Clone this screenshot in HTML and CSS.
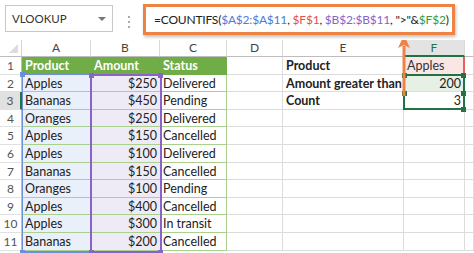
FILE: index.html
```html
<!DOCTYPE html>
<html lang="en">
<head>
    <meta charset="UTF-8">
    <title>COUNTIFS example</title>
    <link rel="stylesheet" href="styles.css">
</head>
<body>
    <div class="toolbar">
        <div class="name-box">VLOOKUP<span class="caret"></span></div>
        <div class="dots"><i></i><i></i><i></i></div>
        <div class="formula">=COUNTIFS(<span class="ref-a">$A$2:$A$11</span>, <span class="ref-f1">$F$1</span>, <span class="ref-b">$B$2:$B$11</span>, "&gt;"&amp;<span class="ref-f2">$F$2</span>)</div>
    </div>

    <div class="sheet">
        <div class="grid">
            <div class="corner"><span></span></div>
            <div class="col-head">A</div>
            <div class="col-head">B</div>
            <div class="col-head">C</div>
            <div class="col-head">D</div>
            <div class="col-head">E</div>
            <div class="col-head active">F</div>
            <div class="col-head"></div>

            <div class="row-head">1</div>
            <div class="cell th">Product</div>
            <div class="cell th">Amount</div>
            <div class="cell th">Status</div>
            <div class="cell"></div>
            <div class="cell label">Product</div>
            <div class="cell crit-f1">Apples</div>
            <div class="cell"></div>

            <div class="row-head">2</div>
            <div class="cell ca">Apples</div>
            <div class="cell cb">$250</div>
            <div class="cell cc">Delivered</div>
            <div class="cell"></div>
            <div class="cell label">Amount greater than</div>
            <div class="cell num crit-f2">200</div>
            <div class="cell"></div>

            <div class="row-head active">3</div>
            <div class="cell ca">Bananas</div>
            <div class="cell cb">$450</div>
            <div class="cell cc">Pending</div>
            <div class="cell"></div>
            <div class="cell label">Count</div>
            <div class="cell num">3</div>
            <div class="cell"></div>

            <div class="row-head">4</div>
            <div class="cell ca">Oranges</div>
            <div class="cell cb">$250</div>
            <div class="cell cc">Delivered</div>
            <div class="cell"></div><div class="cell"></div><div class="cell"></div><div class="cell"></div>

            <div class="row-head">5</div>
            <div class="cell ca">Apples</div>
            <div class="cell cb">$150</div>
            <div class="cell cc">Cancelled</div>
            <div class="cell"></div><div class="cell"></div><div class="cell"></div><div class="cell"></div>

            <div class="row-head">6</div>
            <div class="cell ca">Apples</div>
            <div class="cell cb">$100</div>
            <div class="cell cc">Delivered</div>
            <div class="cell"></div><div class="cell"></div><div class="cell"></div><div class="cell"></div>

            <div class="row-head">7</div>
            <div class="cell ca">Bananas</div>
            <div class="cell cb">$150</div>
            <div class="cell cc">Cancelled</div>
            <div class="cell"></div><div class="cell"></div><div class="cell"></div><div class="cell"></div>

            <div class="row-head">8</div>
            <div class="cell ca">Oranges</div>
            <div class="cell cb">$100</div>
            <div class="cell cc">Pending</div>
            <div class="cell"></div><div class="cell"></div><div class="cell"></div><div class="cell"></div>

            <div class="row-head">9</div>
            <div class="cell ca">Apples</div>
            <div class="cell cb">$400</div>
            <div class="cell cc">Cancelled</div>
            <div class="cell"></div><div class="cell"></div><div class="cell"></div><div class="cell"></div>

            <div class="row-head">10</div>
            <div class="cell ca">Apples</div>
            <div class="cell cb">$300</div>
            <div class="cell cc">In transit</div>
            <div class="cell"></div><div class="cell"></div><div class="cell"></div><div class="cell"></div>

            <div class="row-head">11</div>
            <div class="cell ca">Bananas</div>
            <div class="cell cb">$200</div>
            <div class="cell cc">Cancelled</div>
            <div class="cell"></div><div class="cell"></div><div class="cell"></div><div class="cell"></div>
        </div>

        <!-- reference highlight boxes drawn over the grid -->
        <div class="range range-a"><b class="h tl"></b><b class="h bl"></b></div>
        <div class="range range-b"><b class="h tl"></b><b class="h tr"></b><b class="h bl"></b><b class="h br"></b></div>
        <div class="range range-f1"></div>
        <div class="range range-f2"><b class="h tl"></b><b class="h tr"></b><b class="h ml"></b><b class="h mr"></b><b class="h br"></b></div>

        <svg class="arrow" width="16" height="62" viewBox="0 0 16 62">
            <path d="M8 12 V62" stroke="#ee8444" stroke-width="3" fill="none"/>
            <path d="M8 1 L14 14 L8 11 L2 14 Z" fill="#ee8444"/>
        </svg>
    </div>
</body>
</html>
```

FILE: styles.css
```css
body {
    margin: 0;
    background: #ffffff;
    font-family: Lato, "Liberation Sans", sans-serif;
    color: #222;
    width: 474px;
    height: 253px;
    overflow: hidden;
}
.toolbar {
    height: 40px;
    display: flex;
    align-items: flex-start;
    padding: 4px 0 0 5px;
    box-sizing: border-box;
}
.name-box {
    width: 108px;
    height: 27px;
    box-sizing: border-box;
    border: 1px solid #c8c8c8;
    display: flex;
    align-items: center;
    padding-left: 6px;
    font-size: 11.5px;
    color: #333;
    position: relative;
    margin-top: 1px;
}
.caret {
    position: absolute;
    right: 6px;
    top: 11px;
    border-left: 4px solid transparent;
    border-right: 4px solid transparent;
    border-top: 4px solid #777;
}
.dots {
    width: 32px;
    display: flex;
    flex-direction: column;
    align-items: center;
    gap: 3px;
    padding-top: 12px;
}
.dots i {
    width: 2px;
    height: 2px;
    background: #aaa;
}
.formula {
    width: 312px;
    height: 31px;
    box-sizing: border-box;
    border: 3px solid #ee8444;
    box-shadow: 1px 2px 3px rgba(0, 0, 0, 0.25);
    margin-left: -2px;
    padding-left: 8px;
    display: flex;
    align-items: center;
    font-size: 12px;
    letter-spacing: -0.2px;
    white-space: pre;
    overflow: hidden;
    color: #222;
}
.ref-a { color: #4d7bd6; }
.ref-f1 { color: #e2504c; }
.ref-b { color: #8a63c8; }
.ref-f2 { color: #3b9a3b; }

.sheet {
    position: relative;
    height: 213px;
    overflow: hidden;
}
.grid {
    display: grid;
    grid-template-columns: 22px 69px 69px 67px 56px 121px 61px 9px;
    grid-template-rows: 17px repeat(11, 17.6px);
}
.corner {
    border-right: 1px solid #d4d4d4;
    border-bottom: 1px solid #bdbdbd;
    position: relative;
}
.corner span {
    position: absolute;
    right: 3px;
    bottom: 3px;
    border-left: 9px solid transparent;
    border-bottom: 9px solid #dcdcdc;
}
.col-head {
    border-right: 1px solid #d9d9d9;
    border-bottom: 1px solid #bdbdbd;
    font-size: 12px;
    color: #444;
    text-align: center;
    line-height: 16px;
}
.col-head.active {
    background: #e3e3e3;
    color: #217346;
    border-bottom: 2px solid #217346;
}
.row-head {
    border-right: 1px solid #bdbdbd;
    border-bottom: 1px solid #e1e1e1;
    font-size: 12px;
    color: #555;
    text-align: center;
    line-height: 17px;
}
.row-head.active {
    background: #e1e1e1;
    border-right: 2px solid #217346;
}
.cell {
    border-right: 1px solid #dcdcdc;
    border-bottom: 1px solid #dcdcdc;
    font-size: 12.5px;
    line-height: 17px;
    padding: 0 3px;
    white-space: nowrap;
    overflow: hidden;
}
.th {
    background: #70ad47;
    color: #fff;
    font-weight: bold;
    border-right: none;
    border-bottom: 1px solid #70ad47;
}
.ca {
    background: #eaf0fa;
    border-right: none;
    border-bottom: 1px solid #a9d08e;
}
.cb {
    background: #efebf6;
    text-align: right;
    border-right: none;
    border-bottom: 1px solid #a9d08e;
}
.cc {
    border-right: 1px solid #a9d08e;
    border-bottom: 1px solid #a9d08e;
}
.label {
    font-weight: bold;
}
.num {
    text-align: right;
}
.crit-f1 {
    background: #fbe6e6;
    color: #333;
}
.crit-f2 {
    background: #e6f0e4;
}

.range {
    position: absolute;
    box-sizing: border-box;
}
.range-a {
    left: 22px;
    top: 34px;
    width: 70px;
    height: 180px;
    border: 1px solid #6d8fd8;
    border-bottom: 3px solid #6d8fd8;
}
.range-b {
    left: 90px;
    top: 34px;
    width: 72px;
    height: 180px;
    border: 2px solid #8a63c8;
    border-bottom: 3px solid #8a63c8;
}
.range-f1 {
    left: 403px;
    top: 17px;
    width: 62px;
    height: 18px;
    border-right: 2px solid #e56060;
}
.range-f2 {
    left: 403px;
    top: 34px;
    width: 62px;
    height: 36px;
    border: 2px solid #217346;
}
.h {
    position: absolute;
    width: 5px;
    height: 5px;
}
.range-a .h { background: #6d8fd8; }
.range-b .h { background: #8a63c8; }
.range-f2 .h { background: #217346; }
.tl { left: -3px; top: -3px; }
.tr { right: -3px; top: -3px; }
.bl { left: -3px; bottom: -4px; }
.br { right: -3px; bottom: -4px; }
.ml { left: -3px; top: 15px; }
.mr { right: -3px; top: 15px; }
.arrow {
    position: absolute;
    left: 396px;
    top: -6px;
}
```
